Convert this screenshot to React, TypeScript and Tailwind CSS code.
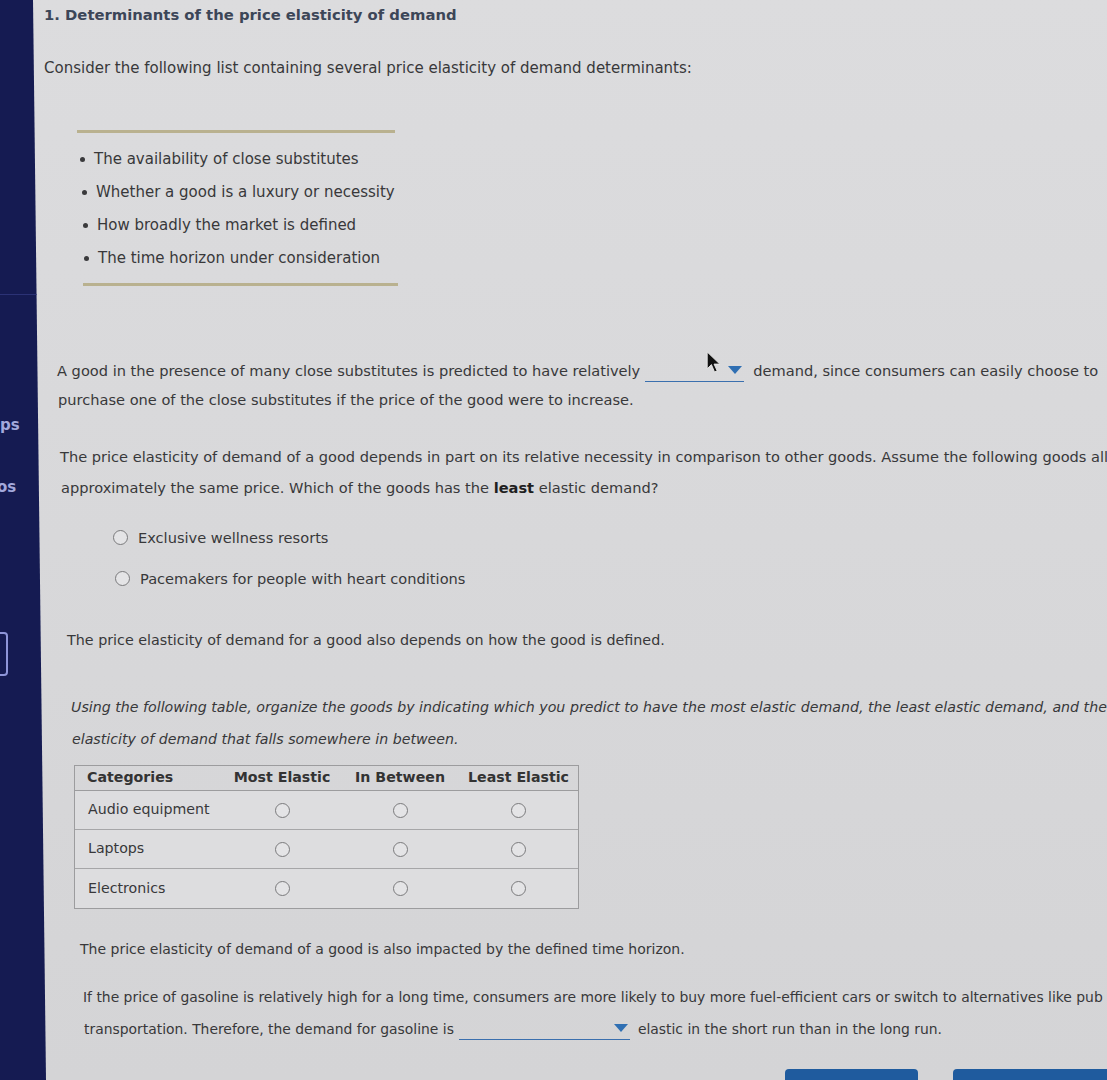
import React from "react";

const FONT = "font-['DejaVu_Sans','Verdana',sans-serif]";

// Blue underline dropdown used in the fill-in-the-blank sentences.
function Blank({ width, cursor }: { width: number; cursor?: boolean }) {
  return (
    <span
      className="relative mx-[5px] inline-flex h-[22px] items-end border-b-[1.5px] border-[#3a6fae] align-middle"
      style={{ width }}
    >
      <svg
        className="absolute right-[2px] top-[6px]"
        width="14"
        height="8"
        viewBox="0 0 14 8"
      >
        <path d="M0 0 L14 0 L7 8 Z" fill="#2f6fb3" />
      </svg>
      {cursor ? (
        <svg
          className="absolute left-[61px] top-[-9px]"
          width="15"
          height="23"
          viewBox="0 0 14 22"
        >
          <path
            d="M1 1 L1 17 L5 13 L8 20 L10.5 19 L7.5 12.5 L13 12.5 Z"
            fill="#111"
            stroke="#eee"
            strokeWidth="0.8"
          />
        </svg>
      ) : null}
    </span>
  );
}

function Radio() {
  return (
    <span className="inline-block h-[15px] w-[15px] rounded-full border-[1.5px] border-[#7a7a7c] bg-[#e4e4e6]" />
  );
}

function Line({
  ml,
  h,
  mt = 0,
  size,
  children,
  italic,
}: {
  ml: number;
  h: number;
  mt?: number;
  size?: number;
  children: React.ReactNode;
  italic?: boolean;
}) {
  // font size drifts a little down the page (the shot is taken at an angle)
  return (
    <div
      className={`flex items-center whitespace-nowrap ${italic ? "italic" : ""}`}
      style={{ marginLeft: ml, height: h, marginTop: mt, fontSize: size }}
    >
      {children}
    </div>
  );
}

const bullets = [
  { ml: 34, text: "The availability of close substitutes" },
  { ml: 36, text: "Whether a good is a luxury or necessity" },
  { ml: 37, text: "How broadly the market is defined" },
  { ml: 38, text: "The time horizon under consideration" },
];

const goods = ["Audio equipment", "Laptops", "Electronics"];

export default function App() {
  return (
    <div
      className={`relative flex h-[1080px] w-[1107px] overflow-hidden bg-linear-to-b from-[#dcdcde] to-[#d4d4d6] text-[14.6px] text-[#38383a] ${FONT}`}
    >
      {/* left nav rail, cut off by the camera */}
      <div className="relative h-full w-[46px] shrink-0 bg-[#151b52] [clip-path:polygon(0_0,33px_0,46px_100%,0_100%)]">
        <div className="h-[295px] border-b border-[#2b3275]" />
        <div className="mt-[120px] text-[15px] font-bold leading-[20px] text-[#a3a9dc]">ps</div>
        <div className="ml-[-3px] mt-[42px] text-[15px] font-bold leading-[20px] text-[#a3a9dc]">os</div>
        <div className="ml-[-12px] mt-[135px] h-[44px] w-[20px] rounded-[4px] border-2 border-[#8e95d9]" />
      </div>

      <div className="relative flex-1">
        <Line ml={-2} h={20} mt={5}>
          <span className="text-[14.8px] font-bold text-[#3c4658]">1. Determinants of the price elasticity of demand</span>
        </Line>
        <Line ml={-2} h={20} mt={33} size={15}>
          Consider the following list containing several price elasticity of demand determinants:
        </Line>

        <div className="ml-[31px] mt-[52px] h-[3px] w-[318px] bg-[#b9b18f]" />
        <div className="mt-[10px]">
          {bullets.map((b) => (
            <Line key={b.text} ml={b.ml} h={33} size={15}>
              <span className="mr-[9px] h-[5px] w-[5px] rounded-full bg-[#3a3a3c]" />
              {b.text}
            </Line>
          ))}
        </div>
        <div className="ml-[37px] mt-[8px] h-[3px] w-[315px] bg-[#b9b18f]" />

        <Line ml={11} h={29} mt={70}>
          A good in the presence of many close substitutes is predicted to have relatively
          <Blank width={99} cursor />
          <span className="ml-[4px]">demand, since consumers can easily choose to</span>
        </Line>
        <Line ml={12} h={29}>
          purchase one of the close substitutes if the price of the good were to increase.
        </Line>

        <Line ml={14} h={31} mt={27}>
          The price elasticity of demand of a good depends in part on its relative necessity in comparison to other goods. Assume the following goods all
        </Line>
        <Line ml={15} h={31}>
          approximately the same price. Which of the goods has the&nbsp;<b className="text-[#1f1f21]">least</b>&nbsp;elastic demand?
        </Line>

        <div className="mt-[14px]">
          <Line ml={67} h={41}>
            <Radio />
            <span className="ml-[10px]">Exclusive wellness resorts</span>
          </Line>
          <Line ml={69} h={41}>
            <Radio />
            <span className="ml-[10px]">Pacemakers for people with heart conditions</span>
          </Line>
        </div>

        <Line ml={21} h={20} mt={32} size={14.3}>
          The price elasticity of demand for a good also depends on how the good is defined.
        </Line>

        <Line ml={25} h={32} mt={41} size={14.2} italic>
          Using the following table, organize the goods by indicating which you predict to have the most elastic demand, the least elastic demand, and the
        </Line>
        <Line ml={26} h={32} size={14.2} italic>
          elasticity of demand that falls somewhere in between.
        </Line>

        <div className="ml-[28px] mt-[9px] w-[505px] border border-[#9c9c9e] text-[14.2px]">
          <div className="grid h-[25px] grid-cols-[148px_118px_118px_1fr] items-center border-b border-[#9c9c9e] font-bold text-[#333]">
            <span className="pl-[12px]">Categories</span>
            <span className="text-center">Most Elastic</span>
            <span className="text-center">In Between</span>
            <span className="text-center">Least Elastic</span>
          </div>
          {goods.map((g, i) => (
            <div
              key={g}
              className={`grid h-[39px] grid-cols-[148px_118px_118px_1fr] items-center bg-[#dddddf] ${
                i < goods.length - 1 ? "border-b border-[#a6a6a8]" : ""
              }`}
            >
              <span className="pl-[13px]">{g}</span>
              <span className="flex justify-center"><Radio /></span>
              <span className="flex justify-center"><Radio /></span>
              <span className="flex justify-center"><Radio /></span>
            </div>
          ))}
        </div>

        <Line ml={34} h={20} mt={30} size={14}>
          The price elasticity of demand of a good is also impacted by the defined time horizon.
        </Line>

        <Line ml={37} h={32} mt={22} size={13.9}>
          If the price of gasoline is relatively high for a long time, consumers are more likely to buy more fuel-efficient cars or switch to alternatives like pub
        </Line>
        <Line ml={38} h={32} size={13.9}>
          transportation. Therefore, the demand for gasoline is
          <Blank width={171} />
          <span className="ml-[3px]">elastic in the short run than in the long run.</span>
        </Line>

        {/* action buttons peeking in at the bottom edge */}
        <div className="absolute bottom-0 left-[739px] flex gap-[35px]">
          <div className="h-[11px] w-[133px] rounded-t-[4px] bg-[#1f5b9e]" />
          <div className="h-[11px] w-[170px] rounded-t-[4px] bg-[#1f5b9e]" />
        </div>
      </div>
    </div>
  );
}
